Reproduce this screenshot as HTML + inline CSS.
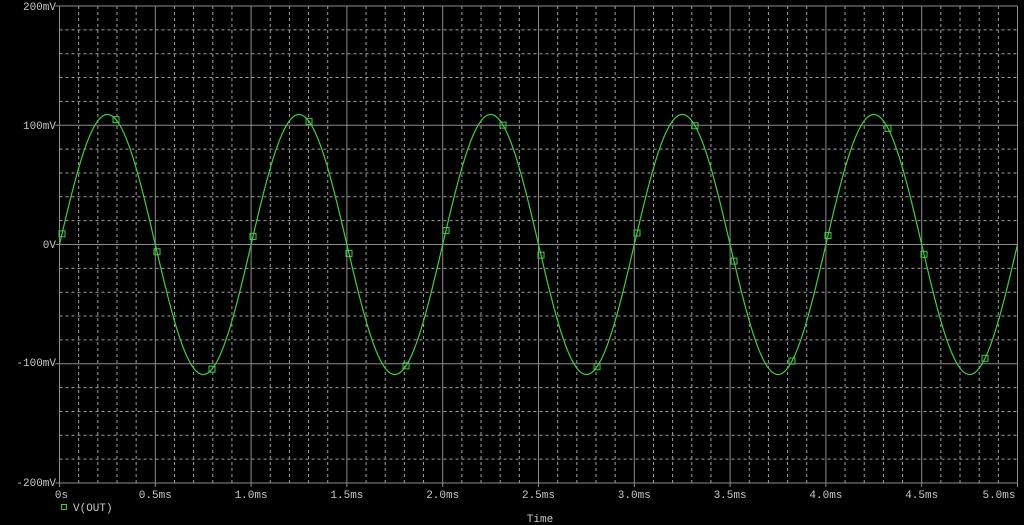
<!DOCTYPE html>
<html><head><style>
html,body{margin:0;padding:0;background:#000;width:1024px;height:525px;overflow:hidden}
svg text{font-family:"Liberation Mono","DejaVu Sans Mono",monospace;font-size:11px;fill:#c8c8c8}
</style></head><body>
<svg id="s" width="1024" height="525" xmlns="http://www.w3.org/2000/svg">
<g id="grid"></g>
<path id="wave" fill="none" stroke="#3fcf3f" stroke-width="1.2"/>
<g id="mk" fill="none" stroke="#3fcf3f" stroke-width="1"></g>
<g text-anchor="end">
<text x="56" y="10">200mV</text>
<text x="56" y="129">100mV</text>
<text x="56" y="248">0V</text>
<text x="56" y="366">-100mV</text>
<text x="56" y="486">-200mV</text>
</g>
<g id="xl" text-anchor="middle"></g>
<rect x="61.5" y="504.5" width="5" height="5" fill="none" stroke="#3fcf3f"/>
<text x="73" y="511">V(OUT)</text>
<text x="540" y="522" text-anchor="middle">Time</text>
</svg>
<script>
var L=59.5,R=1017.5,T=6,B=483,dx=(R-L)/50,dy=(B-T)/20,ns="http://www.w3.org/2000/svg";
var g=document.getElementById('grid'),h='';
for(var i=0;i<=50;i++){var x=L+i*dx;if(i%5==0)h+='<line x1="'+x+'" y1="'+T+'" x2="'+x+'" y2="'+(B+4)+'" stroke="#8c8c8c"/>';else h+='<line x1="'+x+'" y1="'+T+'" x2="'+x+'" y2="'+B+'" stroke="#a0a0a0" stroke-dasharray="3,3"/>';}
for(var j=0;j<=20;j++){var y=T+j*dy;if(j%5==0)h+='<line x1="'+(L-4)+'" y1="'+y+'" x2="'+R+'" y2="'+y+'" stroke="#8c8c8c"/>';else h+='<line x1="'+L+'" y1="'+y+'" x2="'+R+'" y2="'+y+'" stroke="#a0a0a0" stroke-dasharray="3,3"/>';}
g.innerHTML=h;
var xl='',labs=['0s','0.5ms','1.0ms','1.5ms','2.0ms','2.5ms','3.0ms','3.5ms','4.0ms','4.5ms','5.0ms'];
for(var k=0;k<=10;k++){var x=L+k*dx*5,a='middle';if(k==0)x+=2;if(k==10){x=R-2;}xl+='<text x="'+x+'" y="498"'+(k==10?' text-anchor="end"':'')+'>'+labs[k]+'</text>';}
document.getElementById('xl').innerHTML=xl;
var y0=T+10*dy,A=130,P=dx*10;
function f(x){return y0-A*Math.sin(2*Math.PI*(x-L)/P);}
var d='M'+L+' '+f(L);for(var x=L;x<=R;x+=1)d+=' L'+x+' '+f(x).toFixed(2);
document.getElementById('wave').setAttribute('d',d);
var m=[62,116,157,212,253,309,349,406,446,503,541,597,637,695,734,792,828,888,924,985],mh='';
m.forEach(function(x){var y=f(x);mh+='<rect x="'+(x-3)+'" y="'+(y-3)+'" width="6" height="6"/>';});
document.getElementById('mk').innerHTML=mh;
</script>
</body></html>
